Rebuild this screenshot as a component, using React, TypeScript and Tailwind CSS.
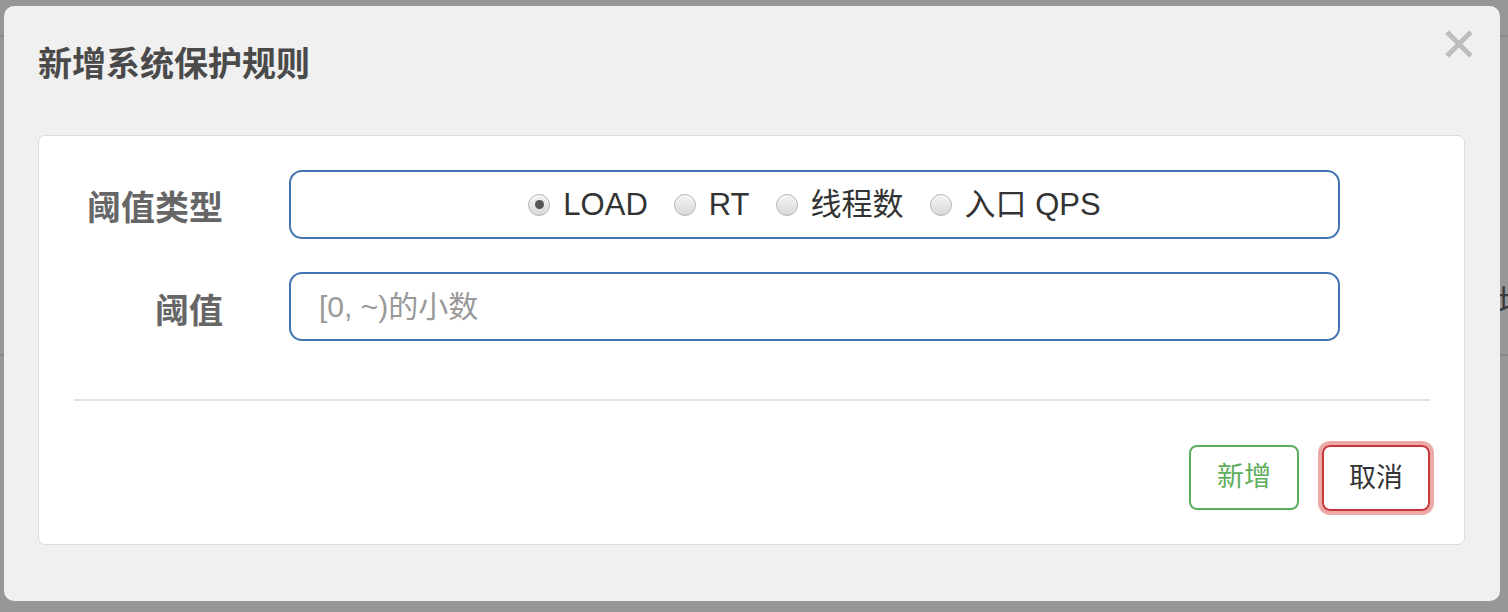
import React from "react";

const font = { fontFamily: '"Liberation Sans", "Noto Sans CJK SC", sans-serif' };

function Radio({ checked, label }: { checked?: boolean; label: string }) {
  return (
    <label className="flex items-center gap-[13px]">
      <span className="w-[22px] h-[22px] rounded-full border border-[#b5b5b5] bg-gradient-to-b from-[#f4f4f4] to-[#d9d9d9] flex items-center justify-center shadow-[inset_0_1px_1px_rgba(255,255,255,0.8)]">
        {checked && <span className="w-[9px] h-[9px] rounded-full bg-[#555]" />}
      </span>
      <span className="text-[31px] leading-none text-[#333]">{label}</span>
    </label>
  );
}

export default function App() {
  return (
    <div className="relative w-[1508px] h-[612px] bg-[#979797] overflow-hidden" style={font}>
      <div className="absolute left-0 right-0 top-[35px] h-[2px] bg-[#8a8a8a]" />
      <div className="absolute left-0 right-0 top-[354px] h-[2px] bg-[#8a8a8a]" />
      <div className="absolute left-[1497px] top-[286px] text-[32px] leading-none text-[#3a3a3a]">坩</div>
      <div className="relative pl-[4px] pt-[6px]">
        <div className="w-[1496px] h-[595px] rounded-[10px] bg-[#f0f0f0] relative">
          <div className="h-[129px] pl-[34px] pt-[37px]">
            <h1 className="text-[34px] font-bold leading-[42px] text-[#4a4a4a]">新增系统保护规则</h1>
          </div>
          <button className="absolute right-[25px] top-[22px] w-[32px] h-[32px] flex items-center justify-center">
            <svg width="30" height="30" viewBox="0 0 30 30">
              <path d="M3 3 L27 27 M27 3 L3 27" stroke="#bdbdbd" strokeWidth="5" />
            </svg>
          </button>
          <div className="mx-[34px] w-[1427px] h-[410px] bg-white border border-[#dcdcdc] rounded-[7px] pl-[35px] pr-[34px] pt-[34px]">
            <div className="flex items-center h-[69px]">
              <div className="w-[149px] pt-[6px] text-right text-[34px] font-bold text-[#666] leading-none">阈值类型</div>
              <div className="ml-[66px] w-[1051px] h-[69px] border-2 border-[#4375b3] rounded-[13px] flex items-center justify-center gap-[26px]">
                <Radio checked label="LOAD" />
                <Radio label="RT" />
                <Radio label="线程数" />
                <Radio label="入口 QPS" />
              </div>
            </div>
            <div className="flex items-center h-[69px] mt-[33px]">
              <div className="w-[149px] pt-[8px] text-right text-[34px] font-bold text-[#666] leading-none">阈值</div>
              <div className="ml-[66px] w-[1051px] h-[69px] border-2 border-[#4375b3] rounded-[13px] flex items-center pl-[28px]">
                <span className="text-[30px] leading-none text-[#999]">[0, ~)的小数</span>
              </div>
            </div>
            <div className="mt-[58px] h-[2px] bg-[#e3e3e3]" />
            <div className="mt-[44px] flex justify-end gap-[23px]">
              <button className="w-[110px] h-[65px] border-2 border-[#5cad5c] rounded-[8px] text-[27px] text-[#5cad5c] flex items-center justify-center">新增</button>
              <button className="w-[108px] h-[66px] border-2 border-[#c9363a] rounded-[8px] text-[27px] text-[#333] flex items-center justify-center shadow-[0_0_0_4px_rgba(217,83,79,0.5)]">取消</button>
            </div>
          </div>
        </div>
      </div>
    </div>
  );
}
